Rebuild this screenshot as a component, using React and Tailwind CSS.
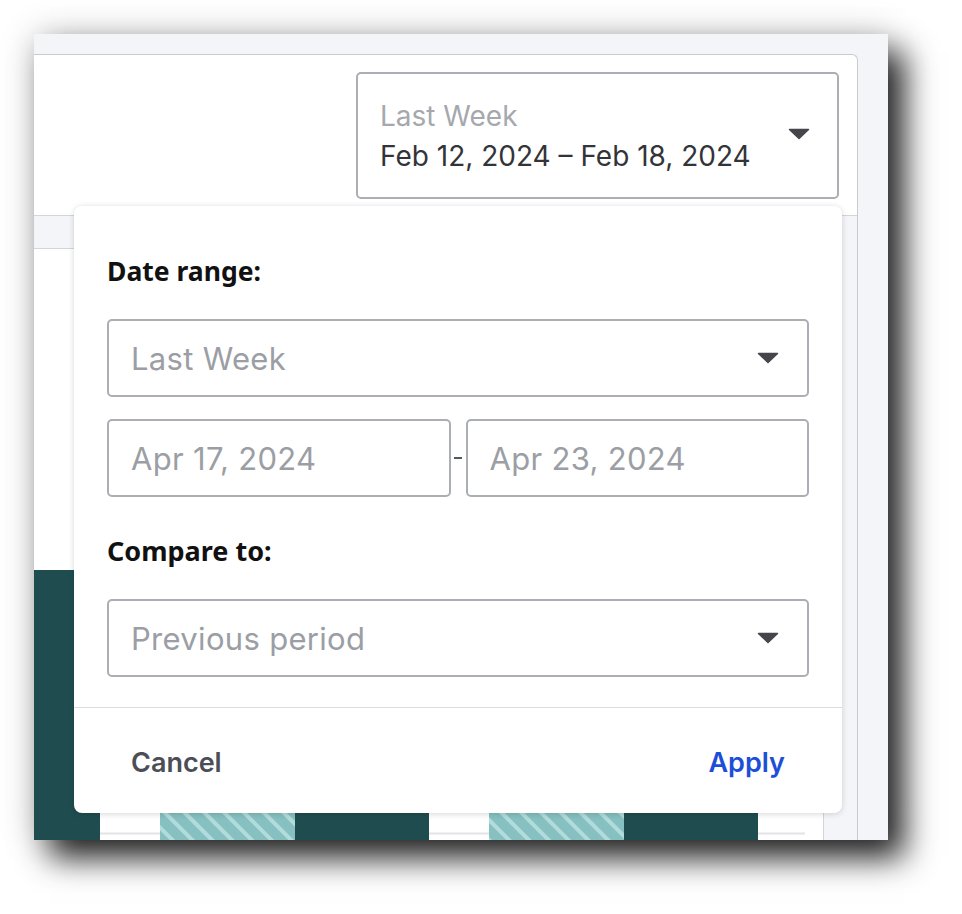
import React from "react";

const Caret = ({ className = "" }) => (
  <svg width="22" height="12" viewBox="0 0 22 12" className={className}>
    <path d="M1.5 1.5 H20.5 L11 10.5 Z" fill="#444649" stroke="#444649" strokeWidth="1.5" strokeLinejoin="round" />
  </svg>
);

const Select = ({ value }) => (
  <div className="flex items-center justify-between h-[78px] border-2 border-[#abaeb2] rounded-[5px] pl-[22px] pr-[28px]">
    <span className="text-[31px] leading-none tracking-[0.01em] text-[#9b9ea4]">{value}</span>
    <Caret />
  </div>
);

const DateInput = ({ value }) => (
  <div className="flex-1 flex items-center h-[78px] border-2 border-[#abaeb2] rounded-[5px] pl-[22px]">
    <span className="text-[31px] leading-none tracking-[0.01em] text-[#9b9ea4]">{value}</span>
  </div>
);

const Chart = () => (
  <svg width="789" height="591" viewBox="0 0 789 591" className="block">
    <defs>
      <pattern id="hatch" width="14" height="14" patternUnits="userSpaceOnUse" patternTransform="rotate(-45)">
        <rect width="14" height="14" fill="#86c0c0" />
        <rect width="4" height="14" fill="#b2dcdc" />
      </pattern>
    </defs>
    <line x1="66" y1="584.5" x2="771" y2="584.5" stroke="#e2e4e8" strokeWidth="2" />
    <rect x="0" y="321" width="66" height="270" fill="#1f4d4f" />
    <rect x="126" y="420" width="135" height="171" fill="url(#hatch)" />
    <rect x="261" y="360" width="134" height="231" fill="#1f4d4f" />
    <rect x="455" y="430" width="135" height="161" fill="url(#hatch)" />
    <rect x="590" y="380" width="134" height="211" fill="#1f4d4f" />
  </svg>
);

export default function App() {
  return (
    <div className="w-[962px] h-[914px] bg-white pl-[34px] pt-[34px] overflow-hidden" style={{ fontFamily: "Inter, 'Liberation Sans', sans-serif" }}>
      {/* window */}
      <div className="relative w-[854px] h-[806px] bg-[#f4f5f8] pt-[20px] shadow-[16px_18px_30px_rgba(0,0,0,0.85),0_0_34px_rgba(0,0,0,0.18)]">
        <div className="flex flex-col w-[824px] h-[786px] bg-white border-t border-r border-[#c9cbd0] rounded-tr-[6px] overflow-hidden">
          {/* header */}
          <div className="flex justify-end h-[161px] pt-[17px] pr-[18px] border-b border-[#d3d5d9]">
            <button className="flex items-center justify-between w-[483px] h-[127px] border-2 border-[#abaeb2] rounded-[5px] pl-[22px] pr-[27px] text-left">
              <div className="flex flex-col">
                <span className="text-[28px] leading-[40px] text-[#a5a8ad]">Last Week</span>
                <span className="text-[28px] leading-[40px] text-[#333438]">Feb 12, 2024 – Feb 18, 2024</span>
              </div>
              <Caret className="mt-[-4px]" />
            </button>
          </div>
          {/* body */}
          <div className="flex-1 bg-[#f4f5f8] pt-[32px]">
            <div className="w-[790px] h-full bg-white border-t border-r border-[#d3d5d9]">
              <Chart />
            </div>
          </div>
        </div>

        {/* date range popover */}
        <div className="absolute left-[40px] top-[172px] w-[768px] h-[607px] bg-white rounded-[8px] shadow-[0_1px_6px_rgba(0,0,0,0.16)] flex flex-col">
          <div className="px-[33px] pt-[50px]">
            <div className="text-[26.5px] leading-[30px] font-bold text-[#111]" style={{ fontFamily: "'Noto Sans', sans-serif" }}>
              Date range:
            </div>
            <div className="mt-[33px]">
              <Select value="Last Week" />
            </div>
            <div className="flex items-center mt-[22px]">
              <DateInput value="Apr 17, 2024" />
              <div className="w-[15px] flex justify-center">
                <span className="block w-[8px] h-[2px] bg-[#55575b]" />
              </div>
              <DateInput value="Apr 23, 2024" />
            </div>
            <div className="mt-[39px] text-[27px] leading-[30px] font-bold text-[#111]" style={{ fontFamily: "'Noto Sans', sans-serif" }}>
              Compare to:
            </div>
            <div className="mt-[33px]">
              <Select value="Previous period" />
            </div>
          </div>
          <div className="mt-[30px] pt-[6px] border-t border-[#dcdde1] flex-1 flex items-center justify-between px-[33px]">
            <button className="px-[24px] text-[27px] font-semibold text-[#4b4e56]">Cancel</button>
            <button className="px-[24px] text-[27px] font-semibold text-[#1d4ed8]">Apply</button>
          </div>
        </div>
      </div>
    </div>
  );
}
